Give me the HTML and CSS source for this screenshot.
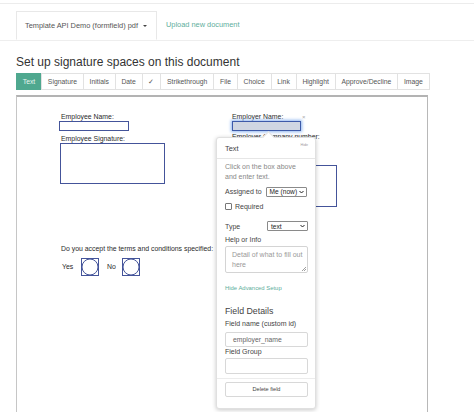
FILE: index.html
```html
<!DOCTYPE html>
<html>
<head>
<meta charset="utf-8">
<link rel="stylesheet" href="styles.css">
</head>
<body>
<div class="topbar"></div>
<div class="nav">
  <div class="tab">Template API Demo (formfield) pdf <span class="caret"></span></div>
  <div class="navlink">Upload new document</div>
</div>
<h1 class="title">Set up signature spaces on this document</h1>
<div class="toolbar">
  <span class="tb active">Text</span><span class="tb">Signature</span><span class="tb">Initials</span><span class="tb">Date</span><span class="tb">✓</span><span class="tb">Strikethrough</span><span class="tb">File</span><span class="tb">Choice</span><span class="tb">Link</span><span class="tb">Highlight</span><span class="tb">Approve/Decline</span><span class="tb">Image</span>
</div>
<div class="doc">
  <div class="lbl f-en">Employee Name:</div>
  <div class="fld f-en-in"></div>
  <div class="lbl f-es">Employee Signature:</div>
  <div class="fld f-es-box"></div>
  <div class="lbl f-rn">Employer Name:</div>
  <div class="fld sel f-rn-in"></div>
  <div class="close">×</div>
  <div class="lbl f-rc">Employer Company number:</div>
  <div class="fld f-rc-box"></div>
  <div class="lbl f-q">Do you accept the terms and conditions specified:</div>
  <div class="lbl f-yes">Yes</div>
  <svg class="radio f-yes-box" width="18" height="18" viewBox="0 0 18 18"><rect x="0.5" y="0.5" width="17" height="17" fill="#fff" stroke="#44549a"/><circle cx="9" cy="9" r="8" fill="#fff" stroke="#44549a"/></svg>
  <div class="lbl f-no">No</div>
  <svg class="radio f-no-box" width="18" height="18" viewBox="0 0 18 18"><rect x="0.5" y="0.5" width="17" height="17" fill="#fff" stroke="#44549a"/><circle cx="9" cy="9" r="8" fill="#fff" stroke="#44549a"/></svg>

  <div class="pop">
    <div class="arrow"></div>
    <div class="pop-head"><span class="pop-title">Text</span><span class="pop-hide">Hide</span></div>
    <div class="pop-body">
      <p class="hint">Click on the box above<br>and enter text.</p>
      <div class="row r-assign"><span>Assigned to</span><span class="select s-me">Me (now)<svg width="5" height="4" viewBox="0 0 5 4"><path d="M0.5 1 L2.5 3 L4.5 1" fill="none" stroke="#222" stroke-width="1"/></svg></span></div>
      <div class="row r-req"><span class="check"></span><span>Required</span></div>
      <div class="row r-type"><span>Type</span><span class="select s-type">text<svg width="5" height="4" viewBox="0 0 5 4"><path d="M0.5 1 L2.5 3 L4.5 1" fill="none" stroke="#222" stroke-width="1"/></svg></span></div>
      <div class="plabel l-help">Help or Info</div>
      <div class="textarea">Detail of what to fill out here<svg class="grip" width="5" height="5" viewBox="0 0 5 5"><path d="M1 5 L5 1 M3 5 L5 3" stroke="#888" stroke-width="0.8"/></svg></div>
      <div class="adv">Hide Advanced Setup</div>
      <div class="fd">Field Details</div>
      <div class="plabel l-fname">Field name (custom id)</div>
      <div class="input i-name">employer_name</div>
      <div class="plabel l-group">Field Group</div>
      <div class="input i-group"></div>
      <div class="sep"></div>
      <div class="btn">Delete field</div>
    </div>
  </div>
</div>
</body>
</html>
```
FILE: styles.css
```css
html, body {
  margin: 0;
  padding: 0;
  background: #fff;
  overflow: hidden;
  width: 474px;
  height: 412px;
}
body {
  font-family: "Liberation Sans", Arial, sans-serif;
  color: #333;
}
.topbar {
  height: 3px;
  border-bottom: 1px solid #ececec;
}
.nav {
  margin-top: 7px;
  padding-left: 16px;
  display: flex;
  height: 29px;
  border-bottom: 1px solid #eeeeee;
}
.tab {
  border: 1px solid #e8e8e8;
  border-bottom: 1px solid #fff;
  background: #fff;
  height: 29px;
  box-sizing: border-box;
  padding: 0 9px 0 8px;
  font-size: 7.4px;
  line-height: 28px;
  color: #555;
  display: flex;
  align-items: center;
  gap: 3px;
}
.caret {
  display: inline-block;
  width: 0;
  height: 0;
  border-left: 2px solid transparent;
  border-right: 2px solid transparent;
  border-top: 2.5px solid #444;
  margin-left: 2px;
}
.navlink {
  padding: 0 9px;
  font-size: 7.4px;
  line-height: 28px;
  color: #5eae9c;
}
.title {
  margin: 14px 0 0 16px;
  font-size: 12px;
  line-height: 15px;
  font-weight: normal;
  color: #333;
}
.toolbar {
  margin: 3px 0 0 16px;
  display: flex;
  height: 17px;
}
.tb {
  border: 1px solid #e2e2e2;
  margin-left: -1px;
  padding: 0 5.8px;
  font-size: 6.8px;
  line-height: 15px;
  color: #555;
  background: #fff;
}
.tb:first-child { margin-left: 0; }
.tb.active {
  background: #4fa88f;
  border-color: #4fa88f;
  color: #e8f5f0;
}
.doc {
  position: relative;
  margin: 5px 0 0 16px;
  width: 412px;
  height: 330px;
  box-sizing: border-box;
  border: 1px solid #c6c6c6;
  border-top: 2px solid #b3b3b3;
  border-right: 1px solid #b8b8b8;
  background: #fff;
}
.lbl {
  position: absolute;
  font-size: 6.9px;
  line-height: 8px;
  color: #2a2a2a;
  white-space: nowrap;
}
.fld {
  position: absolute;
  box-sizing: border-box;
  border: 1px solid #44549a;
  background: #fff;
}
.f-en { left: 44px; top: 16px; }
.f-en-in { left: 42px; top: 24px; width: 70px; height: 10px; }
.f-es { left: 44px; top: 38px; }
.f-es-box { left: 43px; top: 46px; width: 105px; height: 41px; }
.f-rn { left: 215px; top: 16px; }
.f-rn-in {
  left: 215px; top: 24px; width: 69px; height: 10px;
  background: #cfd6e2;
  border-color: #3d5aa8;
  box-shadow: 0 0 3px 1px #8fb6f0;
}
.close {
  position: absolute;
  left: 285px;
  top: 17px;
  font-size: 6px;
  line-height: 6px;
  color: #aaa;
}
.f-rc { left: 215px; top: 36px; }
.f-rc-box { left: 215px; top: 68px; width: 105px; height: 42px; }
.f-q { left: 44px; top: 148px; }
.f-yes { left: 45px; top: 166px; }
.f-no { left: 90px; top: 166px; }
.radio { position: absolute; }
.f-yes-box { left: 64px; top: 161px; }
.f-no-box { left: 105px; top: 161px; }

.pop {
  position: absolute;
  left: 199px;
  top: 40px;
  width: 100px;
  height: 272px;
  box-sizing: border-box;
  background: #fff;
  border: 1px solid #e0e0e0;
  border-radius: 3px;
  box-shadow: 0 1px 4px rgba(0,0,0,0.22);
}
.arrow {
  position: absolute;
  left: 47px;
  top: -5px;
  width: 8px;
  height: 8px;
  background: #fff;
  border-left: 1px solid #e0e0e0;
  border-top: 1px solid #e0e0e0;
  transform: rotate(45deg);
}
.pop-head {
  position: relative;
  height: 20px;
  border-bottom: 1px solid #e6e6e6;
  padding: 0 7px 0 8px;
  display: flex;
  justify-content: space-between;
  align-items: center;
}
.pop-title {
  font-size: 7.4px;
  color: #444;
}
.pop-hide {
  font-size: 3.6px;
  color: #999;
  align-self: flex-start;
  margin-top: 5px;
}
.pop-body {
  padding: 0 7px 0 8px;
  font-size: 7px;
  color: #444;
}
.hint {
  margin: 3px 0 0 0;
  line-height: 10px;
  color: #888;
}
.row {
  display: flex;
  align-items: center;
  height: 11px;
  white-space: nowrap;
}
.r-assign { margin-top: 4px; gap: 4px; }
.r-req { margin-top: 4px; gap: 3px; }
.r-type { margin-top: 9px; justify-content: space-between; height: 10px; }
.select {
  display: inline-flex;
  align-items: center;
  justify-content: space-between;
  box-sizing: border-box;
  height: 10px;
  border: 1px solid #8a8a8a;
  border-radius: 1px;
  padding: 0 2px 0 3px;
  font-size: 6.6px;
  color: #222;
}
.s-me { width: 41px; }
.s-type { width: 41px; }
.check {
  display: inline-block;
  width: 5px;
  height: 5px;
  border: 1px solid #777;
  border-radius: 1px;
}
.plabel {
  line-height: 8px;
  white-space: nowrap;
}
.l-help { margin-top: 5px; }
.textarea {
  position: relative;
  margin-top: 2px;
  height: 27px;
  box-sizing: border-box;
  border: 1px solid #d4d4d4;
  border-radius: 2px;
  padding: 3px 3px 0 6px;
  line-height: 10px;
  color: #999;
}
.grip { position: absolute; right: 1px; bottom: 1px; }
.adv {
  margin-top: 11px;
  font-size: 5.9px;
  line-height: 8px;
  color: #5eae9c;
  white-space: nowrap;
}
.fd {
  margin-top: 14px;
  font-size: 8.8px;
  line-height: 11px;
  color: #444;
}
.l-fname { margin-top: 3px; }
.input {
  box-sizing: border-box;
  border: 1px solid #d8d8d8;
  border-radius: 2px;
  padding-left: 7px;
  color: #666;
  font-size: 6.8px;
}
.i-name { margin-top: 4px; height: 15px; line-height: 13px; }
.l-group { margin-top: 1px; }
.i-group { margin-top: 2px; height: 16px; }
.sep {
  margin: 4px -7px 0 -8px;
  border-top: 1px solid #ececec;
}
.btn {
  margin-top: 3px;
  height: 15px;
  box-sizing: border-box;
  border: 1px solid #d8d8d8;
  border-radius: 2px;
  text-align: center;
  font-size: 5.6px;
  line-height: 13px;
  color: #444;
}
```
